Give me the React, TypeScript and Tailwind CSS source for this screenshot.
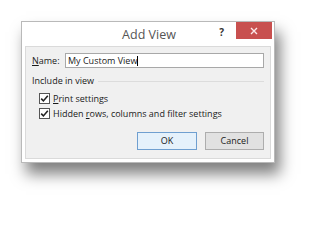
import React from "react";

function Check() {
  return (
    <div className="w-[11px] h-[11px] border border-[#555] bg-white flex items-center justify-center">
      <svg width="9" height="9" viewBox="0 0 9 9">
        <path d="M1.2 4.6 L3.4 6.9 L7.8 1.8" fill="none" stroke="#222" strokeWidth="1.6" />
      </svg>
    </div>
  );
}

export default function App() {
  return (
    <div className="w-[317px] h-[204px] bg-white overflow-hidden" style={{ fontFamily: '"Open Sans", "Noto Sans", sans-serif' }}>
      <div className="ml-[21px] mt-[21px] w-[254px] h-[142px] bg-white border border-[#b9b9b9] shadow-[5px_11px_14px_rgba(0,0,0,0.5)] flex flex-col">
        <div className="h-[24px] flex items-start relative">
          <div className="flex-1 text-center text-[12.5px] text-[#555] leading-none pt-[7px] pl-[2px]">Add View</div>
          <div className="absolute right-[50px] top-[3px] text-[10px] font-bold text-[#333]">?</div>
          <div className="absolute right-[2px] top-0 w-[36px] h-[17px] bg-[#c8504f] flex items-center justify-center">
            <svg width="8" height="8" viewBox="0 0 8 8">
              <path d="M1 1 L7 7 M7 1 L1 7" stroke="#fbe9e9" strokeWidth="1.4" />
            </svg>
          </div>
        </div>
        <div className="flex-1 mx-[3px] mb-[3px] bg-[#f0f0f0] border border-[#dadada] px-[6px] pt-[6px] text-[9px] text-[#1a1a1a]">
          <div className="flex items-center h-[15px]">
            <div className="w-[33px]"><span className="underline">N</span>ame:</div>
            <div className="flex-1 h-[15px] bg-white border border-[#a8a8a8] flex items-center pl-[2px]">
              My Custom View<span className="inline-block w-px h-[10px] bg-black"></span>
            </div>
          </div>
          <div className="flex items-center mt-[7px] h-[12px]">
            <span>Include in view</span>
            <div className="flex-1 h-px bg-[#dcdcdc] ml-[4px]"></div>
          </div>
          <div className="pl-[7px] mt-[6px] flex flex-col gap-[4px]">
            <div className="flex items-center gap-[3px] h-[11px]">
              <Check />
              <span><span className="underline">P</span>rint settings</span>
            </div>
            <div className="flex items-center gap-[3px] h-[11px]">
              <Check />
              <span>Hidden <span className="underline">r</span>ows, columns and filter settings</span>
            </div>
          </div>
          <div className="flex justify-end gap-[8px] mt-[13px] pr-[0px]">
            <div className="w-[60px] h-[18px] bg-[#e5f1fb] border border-[#6f9fd0] flex items-center justify-center">OK</div>
            <div className="w-[59px] h-[18px] bg-[#e1e1e1] border border-[#adadad] flex items-center justify-center">Cancel</div>
          </div>
        </div>
      </div>
    </div>
  );
}
